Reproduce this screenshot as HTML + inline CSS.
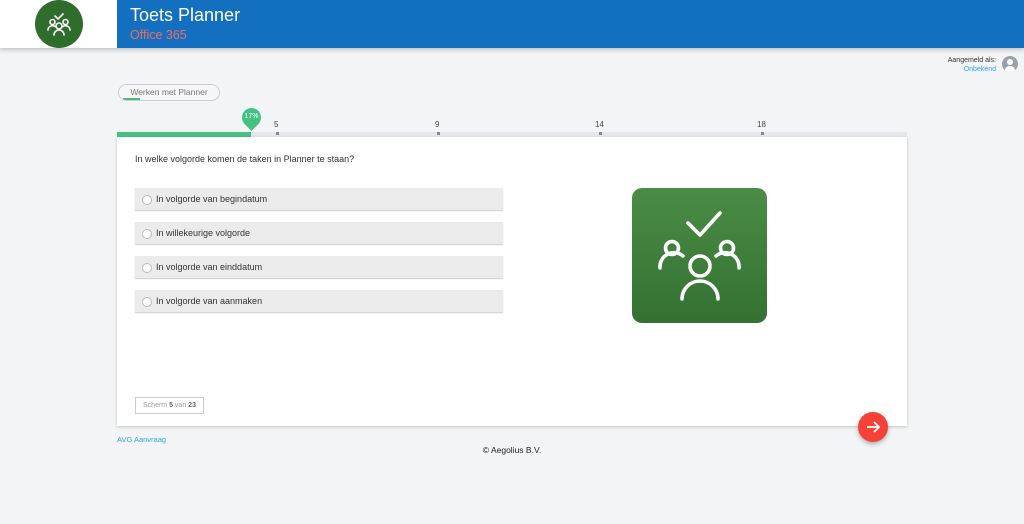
<!DOCTYPE html>
<html><head><meta charset="utf-8"><style>
*{box-sizing:border-box;margin:0;padding:0}
body{width:1024px;height:524px;background:#f3f4f6;font-family:"Liberation Sans",sans-serif;position:relative;overflow:hidden}
.abs{position:absolute}
.hdr{left:0;top:0;width:1024px;height:48px;background:#1370c0;box-shadow:0 2px 4px rgba(0,0,0,.2)}
.logo{left:0;top:0;width:117px;height:48px;background:#fff}
.circ{left:35px;top:0;width:48px;height:48px;border-radius:50%;background:#2e6d2b}
.opt{left:135px;width:368px;height:22px;background:#ebebeb;box-shadow:0 1px 1px rgba(0,0,0,.2);font-size:9px;color:#333;line-height:22px;padding-left:21px}
.opt:before{content:"";position:absolute;left:7px;top:7px;width:8px;height:8px;border:1px solid #bbb;border-radius:50%;background:#fff}
.lbl{font-size:8px;color:#444;top:120px}
.dot{width:3px;height:3px;background:#888;top:132px}
</style></head><body>
<div class="abs hdr"></div>
<div class="abs logo"></div>
<div class="abs circ"><svg width="48" height="48" viewBox="0 0 48 48" fill="none" stroke="#fff" stroke-width="1.6" stroke-linecap="round"><path d="M20 16l3 3 5-5"/><circle cx="17.5" cy="22" r="2.5"/><circle cx="30.5" cy="22" r="2.5"/><circle cx="24" cy="26" r="3"/><path d="M13 30a4.5 4.5 0 0 1 7-3.5M35 30a4.5 4.5 0 0 0-7-3.5M19 35a5 5 0 0 1 10 0"/></svg></div>
<div class="abs" style="left:130px;top:5px;color:#fff;font-size:18px">Toets Planner</div>
<div class="abs" style="left:130px;top:28px;color:#f36b5e;font-size:12.5px">Office 365</div>
<div class="abs" style="right:28px;top:56px;font-size:7px;color:#333;text-align:right;line-height:9px">Aangemeld als:<br><span style="color:#2ea8e6">Onbekend</span></div>
<div class="abs" style="left:1002px;top:56px;width:16px;height:16px;border-radius:50%;background:#9aa0a8;overflow:hidden"><div class="abs" style="left:5px;top:3px;width:6px;height:6px;border-radius:50%;background:#fff"></div><div class="abs" style="left:3px;top:10px;width:10px;height:8px;border-radius:50%;background:#fff"></div></div>
<div class="abs" style="left:118px;top:84px;width:102px;height:17px;border:1px solid #ccd;border-radius:9px;font-size:8.5px;color:#777;text-align:center;line-height:15px;background:#f6f6f8;overflow:hidden">Werken met Planner<div class="abs" style="left:4px;bottom:0;width:17px;height:2px;background:#42c07a"></div></div>
<div class="abs" style="left:117px;top:132px;width:790px;height:5px;background:#e6e7ea"></div>
<div class="abs" style="left:117px;top:132px;width:134px;height:5px;background:#45c283"></div>
<div class="abs" style="left:242px;top:108px;width:19px;height:19px;border-radius:50% 50% 50% 0;transform:rotate(-45deg);background:#45c283"></div>
<div class="abs" style="left:242px;top:113px;width:19px;text-align:center;font-size:7px;color:#fff">17%</div>
<div class="abs lbl" style="left:274px">5</div><div class="abs dot" style="left:276px"></div>
<div class="abs lbl" style="left:435px">9</div><div class="abs dot" style="left:437px"></div>
<div class="abs lbl" style="left:595px">14</div><div class="abs dot" style="left:599px"></div>
<div class="abs lbl" style="left:757px">18</div><div class="abs dot" style="left:761px"></div>
<div class="abs" style="left:117px;top:137px;width:790px;height:289px;background:#fff;box-shadow:0 1px 3px rgba(0,0,0,.2)"></div>
<div class="abs" style="left:135px;top:154px;font-size:9px;color:#333">In welke volgorde komen de taken in Planner te staan?</div>
<div class="abs opt" style="top:188px">In volgorde van begindatum</div>
<div class="abs opt" style="top:222px">In willekeurige volgorde</div>
<div class="abs opt" style="top:256px">In volgorde van einddatum</div>
<div class="abs opt" style="top:290px">In volgorde van aanmaken</div>
<div class="abs" style="left:632px;top:188px;width:135px;height:135px;border-radius:10px;background:linear-gradient(#4a8c45,#347132)"><svg width="135" height="135" viewBox="0 0 135 135" fill="none" stroke="#fff" stroke-width="3.6" stroke-linecap="round" stroke-linejoin="round"><path d="M56 35l12 12 20-22"/><circle cx="40" cy="60" r="6.5"/><circle cx="95" cy="60" r="6.5"/><circle cx="68" cy="78" r="10"/><path d="M28 80a14 14 0 0 1 23-12M107 80a14 14 0 0 0-23-12M50 111a18 18 0 0 1 36 0"/></svg></div>
<div class="abs" style="left:135px;top:397px;width:69px;height:17px;border:1px solid #ccc;font-size:7px;color:#999;text-align:center;line-height:15px">Scherm <b style="color:#666">5</b> van <b style="color:#666">23</b></div>
<div class="abs" style="left:858px;top:412px;width:30px;height:30px;border-radius:50%;background:#f44336;box-shadow:0 2px 5px rgba(0,0,0,.3)"><svg width="30" height="30" viewBox="0 0 30 30" fill="none" stroke="#fff" stroke-width="1.8"><path d="M9 15h12M16 10l5 5-5 5"/></svg></div>
<div class="abs" style="left:117px;top:435px;font-size:7.5px;color:#2ea8e6">AVG Aanvraag</div>
<div class="abs" style="left:0;width:1024px;top:445px;text-align:center;font-size:8.5px;color:#222">© Aegolius B.V.</div>
</body></html>
